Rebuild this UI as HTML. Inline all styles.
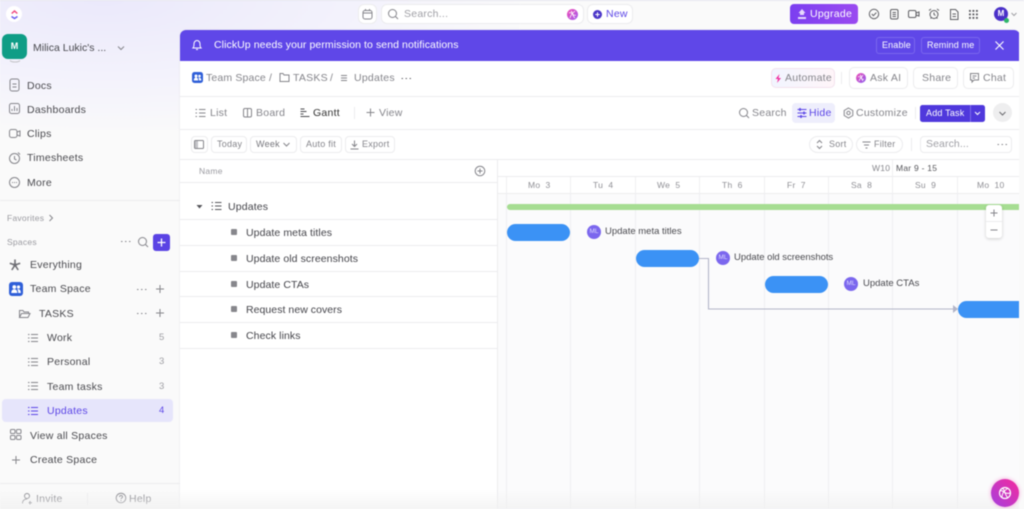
<!DOCTYPE html>
<html><head><meta charset="utf-8">
<style>
html,body{margin:0;padding:0}
body{width:1024px;height:509px;overflow:hidden;position:relative;background:#fafafa;font-family:"Liberation Sans",sans-serif;color:#4a4a4f}
#w{position:absolute;left:0;top:0;width:1024px;height:509px;overflow:hidden;filter:blur(.4px)}
.t{position:absolute;white-space:nowrap;font-size:10.5px;line-height:16px;letter-spacing:.25px}
.a{position:absolute}
.g{color:#85858b}
.btn{position:absolute;box-sizing:border-box;border:1px solid #ececee;border-radius:4px;background:#fff}
.l{position:absolute;background:#ececee}
.v{position:absolute;background:#efeff1;width:1px}
svg{position:absolute;overflow:visible}
.s{fill:none;stroke:#85858b;stroke-width:1}
.d{stroke:#5f5f64}
</style></head><body><div id="w">

<div class="a" style="left:0;top:0;width:520px;height:130px;background:radial-gradient(ellipse at 20% 0%,#ebe9fb 0%,#f4f3fc 45%,#fafafa 75%)"></div>
<div class="l" style="left:0;top:0;width:1024px;height:1px;background:#e6e6f0"></div>

<!-- logo -->
<div class="a" style="left:6px;top:6px;width:16px;height:16px;border-radius:50%;background:#fff"></div>
<svg style="left:6.500px;top:6.500px" width="15" height="15" viewBox="0 0 15 15"><path d="M4.500 9.500L7.500 11.500L10.500 9.500" fill="none" stroke="#6a5cf0" stroke-width="1.500"/><path d="M4.700 6.500L7.500 4L10.300 6.500" fill="none" stroke="#f0477e" stroke-width="1.500"/></svg>

<!-- workspace -->
<div class="a" style="left:2px;top:34px;width:25px;height:25px;border-radius:6px;background:#0f9d86;color:#fff;font-size:9px;font-weight:bold;text-align:center;line-height:25px">M</div>
<div class="t" style="left:33px;top:40px;letter-spacing:0">Milica Lukic's ...</div>
<svg style="left:117px;top:45px" width="8" height="6"><path class="s" d="M1 1.500L4 4.500L7 1.500"/></svg>
<svg style="left:8px;top:60px" width="14" height="4"><path d="M2 .5c1 1.200 2 1.500 5 1.500s4-.3 5-1.500" fill="none" stroke="#c4c4c8"/></svg>

<!-- sidebar nav -->
<svg style="left:8px;top:78px" width="14" height="14"><rect class="s" x="2" y="1" width="9" height="12" rx="2"/><path class="s" d="M4.500 6h4M4.500 9h4"/></svg>
<div class="t" style="left:27px;top:78px">Docs</div>
<svg style="left:8px;top:102px" width="14" height="14"><rect class="s" x="1.500" y="1.500" width="10" height="10" rx="2"/><path class="s" d="M4 9V7M6.500 9V4M9 9V6"/></svg>
<div class="t" style="left:27px;top:102px">Dashboards</div>
<svg style="left:8px;top:127px" width="14" height="14"><rect class="s" x="1.500" y="2.500" width="7.500" height="8" rx="2"/><path class="s" d="M9 5l3-1v5l-3-1"/></svg>
<div class="t" style="left:27px;top:126px">Clips</div>
<svg style="left:8px;top:151px" width="14" height="14"><circle class="s" cx="6.500" cy="7.500" r="5"/><path class="s" d="M6.500 5v3l2 1M10 1.500l2 2"/></svg>
<div class="t" style="left:27px;top:150px">Timesheets</div>
<svg style="left:8px;top:176px" width="14" height="14"><circle class="s" cx="6.500" cy="6.500" r="5"/><path d="M4 6.500h1M6 6.500h1M8 6.500h1" stroke="#85858b" fill="none"/></svg>
<div class="t" style="left:27px;top:175px">More</div>
<div class="l" style="left:0;top:200px;width:180px;height:1px"></div>

<div class="t" style="left:7px;top:210px;font-size:8.500px;color:#9a9aa0">Favorites</div>
<svg style="left:48px;top:214px" width="6" height="8"><path class="s" d="M1.500 1L4.500 4L1.500 7"/></svg>
<div class="t" style="left:7px;top:234px;font-size:8.500px;color:#9a9aa0">Spaces</div>
<svg style="left:120px;top:240px" width="14" height="3"><path d="M1 1.500h1.500M5 1.500h1.500M9 1.500h1.500" stroke="#85858b"/></svg>
<svg style="left:137px;top:236px" width="12" height="12"><circle class="s" cx="5.500" cy="5.500" r="4"/><path class="s" d="M8.500 8.500L11 11"/></svg>
<div class="a" style="left:153px;top:234px;width:17px;height:17px;border-radius:3px;background:#5a43e4"></div>
<svg style="left:153px;top:234px" width="17" height="17"><path d="M8.500 4.500v8M4.500 8.500h8" stroke="#fff" stroke-width="1.300"/></svg>

<svg style="left:8px;top:258px" width="14" height="14"><g stroke="#6f6f75" stroke-width="1.600"><path d="M7 7V1.500M7 7L1.800 5.300M7 7L12.200 5.300M7 7L3.800 12M7 7L10.200 12"/></g><circle cx="7" cy="7" r="1.800" fill="#6f6f75"/></svg>
<div class="t" style="left:30px;top:257px">Everything</div>
<div class="a" style="left:9px;top:282px;width:14px;height:14px;border-radius:3px;background:#2f5fd8"></div>
<svg style="left:9px;top:282px" width="14" height="14"><circle cx="5.300" cy="5" r="1.900" fill="#fff"/><circle cx="9.500" cy="5" r="1.600" fill="#fff"/><path d="M2.300 11c0-2.800 1.300-3.800 3-3.800s3 1 3 3.800zM9.200 11c0-2-.3-3-1-3.700 2-.5 3.600.6 3.600 3.700z" fill="#fff"/></svg>
<div class="t" style="left:30px;top:281px">Team Space</div>
<svg style="left:136px;top:288px" width="14" height="3"><path d="M1 1.500h1.500M5 1.500h1.500M9 1.500h1.500" stroke="#85858b"/></svg>
<svg style="left:155px;top:284px" width="10" height="10"><path class="s" d="M5 1v8M1 5h8"/></svg>
<svg style="left:18px;top:307px" width="14" height="14"><path class="s" d="M1.500 10.500V3.500h3.500l1 1.500h4.500v1.500M1.500 10.500l2-4h8.500l-2 4z"/></svg>
<div class="t" style="left:39px;top:306px">TASKS</div>
<svg style="left:136px;top:312px" width="14" height="3"><path d="M1 1.500h1.500M5 1.500h1.500M9 1.500h1.500" stroke="#85858b"/></svg>
<svg style="left:155px;top:308px" width="10" height="10"><path class="s" d="M5 1v8M1 5h8"/></svg>

<svg style="left:27px;top:332px" width="12" height="12"><path class="s" d="M4 2.500h7M4 6h7M4 9.500h7M1 2.500h1.500M1 6h1.500M1 9.500h1.500"/></svg>
<div class="t" style="left:47px;top:330px">Work</div><div class="t" style="left:159px;top:330px;font-size:9.500px;color:#a0a0a5">5</div>
<svg style="left:27px;top:356px" width="12" height="12"><path class="s" d="M4 2.500h7M4 6h7M4 9.500h7M1 2.500h1.500M1 6h1.500M1 9.500h1.500"/></svg>
<div class="t" style="left:47px;top:354px">Personal</div><div class="t" style="left:159px;top:354px;font-size:9.500px;color:#a0a0a5">3</div>
<svg style="left:27px;top:380px" width="12" height="12"><path class="s" d="M4 2.500h7M4 6h7M4 9.500h7M1 2.500h1.500M1 6h1.500M1 9.500h1.500"/></svg>
<div class="t" style="left:47px;top:379px">Team tasks</div><div class="t" style="left:159px;top:379px;font-size:9.500px;color:#a0a0a5">3</div>
<div class="a" style="left:2px;top:399px;width:171px;height:23px;border-radius:4px;background:#e6e5fb"></div>
<svg style="left:27px;top:405px" width="12" height="12"><path fill="none" stroke="#5b45e6" d="M4 2.500h7M4 6h7M4 9.500h7M1 2.500h1.500M1 6h1.500M1 9.500h1.500"/></svg>
<div class="t" style="left:47px;top:403px;color:#5b45e6">Updates</div><div class="t" style="left:159px;top:403px;font-size:9.500px;color:#5b45e6">4</div>
<svg style="left:10px;top:429px" width="12" height="12"><rect class="s" x=".5" y=".5" width="4.500" height="4" rx="1"/><rect class="s" x="6.500" y=".5" width="4.500" height="4" rx="1"/><rect class="s" x=".5" y="6.500" width="4.500" height="4" rx="1"/><rect class="s" x="6.500" y="6.500" width="4.500" height="4" rx="1"/></svg>
<div class="t" style="left:30px;top:428px">View all Spaces</div>
<svg style="left:11px;top:455px" width="10" height="10"><path class="s" d="M5 1v8M1 5h8"/></svg>
<div class="t" style="left:30px;top:452px">Create Space</div>
<div class="l" style="left:0;top:483px;width:180px;height:1px"></div>
<div class="l" style="left:87px;top:493px;width:1px;height:12px"></div>
<svg style="left:21px;top:492px" width="13" height="13"><circle class="s" cx="6" cy="4" r="2.500"/><path class="s" d="M1.500 11.500c0-3 2-4.500 4.500-4.500M9 9v3.500M7.500 10.800h3.500"/></svg>
<div class="t g" style="left:36px;top:491px">Invite</div>
<svg style="left:115px;top:492px" width="12" height="12"><circle class="s" cx="6" cy="6" r="4.800"/><path class="s" d="M4.500 5c0-2 3-2 3 0 0 1-1.500 1-1.500 2M6 8v1"/></svg>
<div class="t g" style="left:129px;top:491px">Help</div>

<!-- top bar -->
<div class="btn" style="left:358px;top:4px;width:19px;height:20px;border-radius:6px"></div>
<svg style="left:362px;top:9px" width="11" height="11"><rect class="s" x="1" y="1.500" width="9" height="8.500" rx="2"/><path class="s" d="M1 4h9M3.500 0v2M7.500 0v2"/></svg>
<div class="btn" style="left:381px;top:4px;width:203px;height:20px;border-radius:6px"></div>
<svg style="left:387px;top:8px" width="12" height="12"><circle class="s" cx="5.500" cy="5.500" r="4"/><path class="s" d="M8.500 8.500L11 11"/></svg>
<div class="t" style="left:404px;top:6px;color:#a0a0a6">Search...</div>
<div class="a" style="left:567px;top:9px;width:11px;height:11px;border-radius:50%;background:linear-gradient(135deg,#f04bb5,#a35cf0)"></div>
<svg style="left:567px;top:9px" width="11" height="11"><path d="M2 4c3-2 4 4 7 2M4 2c2 1 1 5 4 7M8 2C6 4 4 5 3 9" fill="none" stroke="#fff" stroke-width=".7"/></svg>
<div class="btn" style="left:587px;top:4px;width:46px;height:20px;border-radius:6px"></div>
<div class="a" style="left:593px;top:9.500px;width:9px;height:9px;border-radius:50%;background:#4a35c8"></div>
<svg style="left:593px;top:9.500px" width="9" height="9"><path d="M4.500 2.300v4.400M2.300 4.500h4.400" stroke="#fff"/></svg>
<div class="t" style="left:606px;top:6px;color:#5b45e6">New</div>

<div class="a" style="left:790px;top:4px;width:68px;height:20px;border-radius:4px;background:linear-gradient(90deg,#7b3ff0,#9a4af0)"></div>
<svg style="left:796px;top:8px" width="12" height="12"><path d="M6 1l3.500 4H8v2H4V5H2.500zM2 9h8v2H2z" fill="#fff" opacity=".8"/></svg>
<div class="t" style="left:810px;top:6px;color:#fff">Upgrade</div>
<svg style="left:868px;top:8px" width="12" height="12"><circle class="s d" cx="6" cy="6" r="4.700"/><path class="s d" d="M3.800 6l1.600 1.700L8.300 4.600"/></svg>
<svg style="left:888px;top:8px" width="12" height="12"><rect class="s d" x="2.500" y="1.500" width="7.500" height="9.500" rx="1.500"/><path class="s d" d="M4.500 4.500h3.500M4.500 6.500h3.500M4.500 8.500h3.500"/></svg>
<svg style="left:908px;top:8px" width="12" height="12"><rect class="s d" x=".5" y="2.500" width="7.500" height="7" rx="1.500"/><path class="s d" d="M8 5l3-1v4l-3-1"/></svg>
<svg style="left:928px;top:8px" width="12" height="12"><circle class="s d" cx="6" cy="6.500" r="4"/><path class="s d" d="M6 4.500v2l1.500 1M1 2.500l2-1.500M11 2.500L9 1M2.500 10.500L3.500 9.500M9.500 10.500L8.500 9.500"/></svg>
<svg style="left:948px;top:8px" width="12" height="12"><path class="s d" d="M2.500 1.500h5l2.500 2.500v7.500h-7.500z"/><path class="s d" d="M4.500 6h3.500M4.500 8.500h3.500"/></svg>
<svg style="left:968px;top:9px" width="11" height="11"><g fill="#55555a"><rect x="1" y="1" width="1.800" height="1.800"/><rect x="4.500" y="1" width="1.800" height="1.800"/><rect x="8" y="1" width="1.800" height="1.800"/><rect x="1" y="4.500" width="1.800" height="1.800"/><rect x="4.500" y="4.500" width="1.800" height="1.800"/><rect x="8" y="4.500" width="1.800" height="1.800"/><rect x="1" y="8" width="1.800" height="1.800"/><rect x="4.500" y="8" width="1.800" height="1.800"/><rect x="8" y="8" width="1.800" height="1.800"/></g></svg>
<div class="a" style="left:994px;top:7px;width:14px;height:14px;border-radius:50%;background:#4a30c8;color:#fff;font-size:8px;font-weight:bold;text-align:center;line-height:14px">M</div>
<div class="a" style="left:1004px;top:18px;width:5px;height:5px;border-radius:50%;background:#2fb56a"></div>
<svg style="left:1011px;top:12px" width="6" height="5"><path class="s" d="M.5 1L3 3.500L5.500 1" style="stroke:#a0a0a5"/></svg>

<!-- main card -->
<div class="a" style="left:180px;top:30px;width:839px;height:479px;background:#fff;border-radius:6px 6px 0 0;box-shadow:0 0 2px #e2e2e6"></div>
<div class="a" style="left:180px;top:30px;width:840px;height:31px;background:#5f47e8;border-radius:6px 6px 0 0"></div>
<svg style="left:191px;top:39px" width="12" height="12"><path fill="none" stroke="#fff" d="M2 9c1-1 1-2 1-4s1.300-3.500 3-3.500S9 3 9 5s0 3 1 4zM5 10.500h2"/></svg>
<div class="t" style="left:214px;top:37px;color:#fff;letter-spacing:.08px">ClickUp needs your permission to send notifications</div>
<div class="a" style="left:876px;top:36.500px;width:39px;height:17px;border:1px solid #7a66ee;border-radius:3px;box-sizing:border-box"></div>
<div class="t" style="left:882px;top:37px;color:#fff;font-size:9px;letter-spacing:.15px">Enable</div>
<div class="a" style="left:921px;top:36.500px;width:59px;height:17px;border:1px solid #7a66ee;border-radius:3px;box-sizing:border-box"></div>
<div class="t" style="left:927px;top:37px;color:#fff;font-size:9px;letter-spacing:.15px">Remind me</div>
<svg style="left:995px;top:41px" width="9" height="9"><path d="M.5.500l8 8M8.500.500l-8 8" stroke="#fff" stroke-width="1.100"/></svg>

<!-- breadcrumb -->
<div class="a" style="left:192px;top:72px;width:11px;height:11px;border-radius:2.500px;background:#2f5fd8"></div>
<svg style="left:192px;top:72px" width="11" height="11"><circle cx="4" cy="4" r="1.500" fill="#fff"/><circle cx="7.500" cy="4" r="1.300" fill="#fff"/><path d="M1.800 8.500c0-2 1-3 2.200-3s2.200 1 2.200 3zM7 8.500c0-1.200-.1-2-.6-2.800 1.800-.5 2.900.6 2.900 2.800z" fill="#fff"/></svg>
<div class="t g" style="left:206px;top:70px;letter-spacing:.15px">Team Space</div>
<div class="t g" style="left:269px;top:70px">/</div>
<svg style="left:279px;top:72px" width="11" height="11"><path class="s" d="M1 9.500V1.500h3l1 1.500h5v6.500z"/></svg>
<div class="t g" style="left:293px;top:70px">TASKS</div>
<div class="t g" style="left:330px;top:70px">/</div>
<svg style="left:340px;top:74px" width="8" height="9"><path class="s" d="M1 1.500h6M1 4h6M1 6.500h6"/></svg>
<div class="t g" style="left:354px;top:70px;">Updates</div>
<svg style="left:401px;top:77px" width="12" height="3"><path d="M.5 1.500h1.500M4.500 1.500h1.500M8.500 1.500h1.500" stroke="#6a6a70"/></svg>

<div class="a" style="left:771px;top:68px;width:64px;height:20px;border-radius:5px;border:1px solid #f3e3ee;box-sizing:border-box;background:linear-gradient(90deg,#f2f5ff,#fff5f9)"></div>
<svg style="left:775px;top:74px" width="7" height="9"><path d="M4.500 0L.5 5h2.500L2 9l4-5H3.500z" fill="#f0309f"/></svg>
<div class="t g" style="left:785px;top:70px">Automate</div>
<div class="l" style="left:841px;top:72px;width:1px;height:12px"></div>
<div class="btn" style="left:849px;top:67px;width:59px;height:22px;border-radius:5px"></div>
<div class="a" style="left:856px;top:73px;width:10px;height:10px;border-radius:50%;background:linear-gradient(135deg,#f04bb5,#8a5cf0)"></div>
<svg style="left:856px;top:73px" width="10" height="10"><path d="M2 4c3-2 3 4 6 2M4 2c2 1 1 4 3 6M7 2C6 4 4 5 3 8" fill="none" stroke="#fff" stroke-width=".7"/></svg>
<div class="t g" style="left:870px;top:70px">Ask AI</div>
<div class="btn" style="left:913px;top:67px;width:45px;height:22px;border-radius:5px"></div>
<div class="t g" style="left:922px;top:70px">Share</div>
<div class="btn" style="left:963px;top:67px;width:51px;height:22px;border-radius:5px"></div>
<svg style="left:969px;top:72px" width="11" height="11"><path class="s" d="M1.500 1.500h8v6.500h-4.500l-2 2v-2h-1.500z"/><path class="s" d="M3.500 4h4M3.500 6h2.500"/></svg>
<div class="t g" style="left:983px;top:70px">Chat</div>
<div class="l" style="left:180px;top:95.500px;width:839px;height:1px"></div>

<!-- tabs -->
<svg style="left:195px;top:108px" width="11" height="11"><path class="s" d="M4 1.500h6.500M4 5h6.500M4 8.500h6.500M.5 1.500h1.500M.5 5h1.500M.5 8.500h1.500"/></svg>
<div class="t g" style="left:210px;top:105px">List</div>
<svg style="left:243px;top:108px" width="10" height="10"><rect class="s" x=".5" y=".5" width="8" height="8.500" rx="1.500"/><path class="s" d="M4.500.5v8.500"/></svg>
<div class="t g" style="left:256px;top:105px">Board</div>
<svg style="left:300px;top:108px" width="10" height="10"><path d="M.5 1h4M.5 3.500h6M.5 6h3M.5 8.500h9" stroke="#4a4a4f" fill="none"/></svg>
<div class="t" style="left:313px;top:105px;color:#333">Gantt</div>
<div class="a" style="left:295px;top:128.500px;width:49px;height:1.500px;background:#6a6a6f"></div>
<div class="l" style="left:354px;top:107px;width:1px;height:12px"></div>
<svg style="left:366px;top:108px" width="9" height="9"><path class="s" d="M4.500.5v8M.5 4.500h8"/></svg>
<div class="t g" style="left:379px;top:105px">View</div>

<svg style="left:738px;top:107px" width="12" height="12"><circle class="s" cx="5.500" cy="5.500" r="4"/><path class="s" d="M8.500 8.500L11 11"/></svg>
<div class="t g" style="left:752px;top:105px">Search</div>
<div class="a" style="left:792px;top:103px;width:43px;height:20px;border-radius:4px;background:#eeeefc"></div>
<svg style="left:797px;top:108px" width="11" height="10"><path fill="none" stroke="#5b45e6" d="M.5 1.500h9M.5 5h9M.5 8.500h9"/><path stroke="#5b45e6" stroke-width="1.500" d="M3 0v3M7 3.500v3M4 7v3"/></svg>
<div class="t" style="left:809px;top:105px;color:#5b45e6">Hide</div>
<svg style="left:843px;top:107px" width="11" height="12"><path class="s" d="M5.500 1l4.300 2.500v5L5.500 11 1.200 8.500v-5z"/><circle class="s" cx="5.500" cy="6" r="1.700"/></svg>
<div class="t g" style="left:856px;top:105px">Customize</div>
<div class="l" style="left:915px;top:107px;width:1px;height:12px"></div>
<div class="a" style="left:920px;top:104.500px;width:65px;height:17px;border-radius:2.500px;background:#4f38dc"></div>
<div class="t" style="left:926px;top:105px;color:#fff;font-size:9px;letter-spacing:.2px">Add Task</div>
<div class="a" style="left:970px;top:104.500px;width:1px;height:17px;background:#7c69ea"></div>
<svg style="left:974px;top:111px" width="7" height="5"><path fill="none" stroke="#fff" d="M1 1l2.500 2.500L6 1"/></svg>
<div class="a" style="left:993px;top:103px;width:19px;height:19px;border-radius:50%;background:#eeeeef"></div>
<svg style="left:999px;top:111px" width="7" height="5"><path class="s" d="M.5 1l3 3 3-3" style="stroke:#6a6a6f"/></svg>
<div class="l" style="left:180px;top:129px;width:839px;height:1px"></div>

<!-- toolbar -->
<div class="btn" style="left:191px;top:136px;width:17px;height:17px"></div>
<svg style="left:194px;top:140px" width="10" height="9"><rect class="s" x=".5" y=".5" width="9" height="8" rx="1"/><rect x="1" y="1" width="3" height="7" fill="#c4c4c8"/></svg>
<div class="btn" style="left:211px;top:136px;width:36px;height:17px"></div>
<div class="t g" style="left:217px;top:136px;font-size:9px">Today</div>
<div class="btn" style="left:250px;top:136px;width:47px;height:17px"></div>
<div class="t" style="left:256px;top:136px;font-size:9px;color:#77777d">Week</div>
<svg style="left:283px;top:142px" width="7" height="5"><path class="s" d="M.5 1l3 3 3-3"/></svg>
<div class="btn" style="left:300px;top:136px;width:42px;height:17px"></div>
<div class="t g" style="left:306px;top:136px;font-size:9px">Auto fit</div>
<div class="btn" style="left:345px;top:136px;width:50px;height:17px"></div>
<svg style="left:350px;top:140px" width="9" height="10"><path class="s" d="M4.500.5V6M2 4l2.500 2.500L7 4M.5 9h8"/></svg>
<div class="t g" style="left:362px;top:136px;font-size:9px">Export</div>

<div class="btn" style="left:809px;top:136px;width:44px;height:17px;border-radius:9px"></div>
<svg style="left:816px;top:140px" width="7" height="9"><path class="s" d="M1 3l2.500-2.500L6 3M1 6l2.500 2.500L6 6"/></svg>
<div class="t g" style="left:829px;top:136px;font-size:9px">Sort</div>
<div class="btn" style="left:856px;top:136px;width:47px;height:17px;border-radius:9px"></div>
<svg style="left:862px;top:141px" width="9" height="8"><path class="s" d="M.5 1h8M2 4h5M3.500 7h2"/></svg>
<div class="t g" style="left:874px;top:136px;font-size:9px">Filter</div>
<div class="l" style="left:911px;top:138px;width:1px;height:13px"></div>
<div class="btn" style="left:920px;top:136px;width:92px;height:17px"></div>
<div class="t" style="left:926px;top:136px;color:#a0a0a6;font-size:10.500px;letter-spacing:.1px">Search...</div>
<svg style="left:997px;top:143px" width="12" height="3"><path d="M.5 1.500h1.500M4.500 1.500h1.500M8.500 1.500h1.500" stroke="#85858b"/></svg>
<div class="l" style="left:180px;top:159px;width:839px;height:1px"></div>

<!-- left pane -->
<div class="t" style="left:199px;top:163px;font-size:8.500px;color:#9a9aa0">Name</div>
<svg style="left:474px;top:165px" width="12" height="12"><circle class="s" cx="6" cy="6" r="4.800"/><path class="s" d="M6 3.500v5M3.500 6h5"/></svg>
<div class="l" style="left:180px;top:182px;width:317px;height:1px"></div>
<svg style="left:196px;top:205px" width="7" height="4"><path d="M.5 0h6L3.500 3.500z" fill="#55555a"/></svg>
<svg style="left:211px;top:201px" width="11" height="11"><path d="M4 1.500h6.500M4 5h6.500M4 8.500h6.500M.5 1.500h1.500M.5 5h1.500M.5 8.500h1.500" stroke="#55555a" fill="none"/></svg>
<div class="t" style="left:228px;top:199px;color:#44444a;letter-spacing:.15px">Updates</div>
<div class="l" style="left:180px;top:219px;width:317px;height:1px"></div>
<div class="l" style="left:180px;top:245px;width:317px;height:1px"></div>
<div class="l" style="left:180px;top:271px;width:317px;height:1px"></div>
<div class="l" style="left:180px;top:296px;width:317px;height:1px"></div>
<div class="l" style="left:180px;top:322px;width:317px;height:1px"></div>
<div class="l" style="left:180px;top:348px;width:317px;height:1px"></div>
<div class="a" style="left:231px;top:229px;width:6px;height:6px;border-radius:1px;background:#87878c"></div>
<div class="t" style="left:246px;top:225px;color:#44444a;letter-spacing:.08px">Update meta titles</div>
<div class="a" style="left:231px;top:255px;width:6px;height:6px;border-radius:1px;background:#87878c"></div>
<div class="t" style="left:246px;top:251px;color:#44444a;letter-spacing:.08px">Update old screenshots</div>
<div class="a" style="left:231px;top:281px;width:6px;height:6px;border-radius:1px;background:#87878c"></div>
<div class="t" style="left:246px;top:277px;color:#44444a;letter-spacing:.08px">Update CTAs</div>
<div class="a" style="left:231px;top:306px;width:6px;height:6px;border-radius:1px;background:#87878c"></div>
<div class="t" style="left:246px;top:302px;color:#44444a;letter-spacing:.05px">Request new covers</div>
<div class="a" style="left:231px;top:332px;width:6px;height:6px;border-radius:1px;background:#87878c"></div>
<div class="t" style="left:246px;top:328px;color:#44444a;letter-spacing:.08px">Check links</div>

<!-- gantt -->
<div class="a" style="left:498px;top:193px;width:521px;height:316px;background:#fbfbfc"></div>
<div class="l" style="left:497px;top:160px;width:1px;height:349px"></div>
<div class="l" style="left:498px;top:176px;width:521px;height:1px"></div>
<div class="l" style="left:498px;top:193px;width:521px;height:1px"></div>
<div class="v" style="left:506px;top:177px;height:332px"></div>
<div class="v" style="left:570px;top:177px;height:332px"></div>
<div class="v" style="left:635px;top:177px;height:332px"></div>
<div class="v" style="left:699px;top:177px;height:332px"></div>
<div class="v" style="left:764px;top:177px;height:332px"></div>
<div class="v" style="left:828px;top:177px;height:332px"></div>
<div class="v" style="left:892px;top:160px;height:349px"></div>
<div class="v" style="left:957px;top:177px;height:332px"></div>
<div class="t g" style="left:872px;top:160px;font-size:8.500px">W10</div>
<div class="t" style="left:896px;top:160px;font-size:8.500px;color:#55555a">Mar 9 - 15</div>
<div class="t" style="left:528px;top:177px;font-size:8.500px;color:#8f8f95">Mo&nbsp; 3</div>
<div class="t" style="left:593px;top:177px;font-size:8.500px;color:#8f8f95">Tu&nbsp; 4</div>
<div class="t" style="left:657px;top:177px;font-size:8.500px;color:#8f8f95">We&nbsp; 5</div>
<div class="t" style="left:722px;top:177px;font-size:8.500px;color:#8f8f95">Th&nbsp; 6</div>
<div class="t" style="left:787px;top:177px;font-size:8.500px;color:#8f8f95">Fr&nbsp; 7</div>
<div class="t" style="left:851px;top:177px;font-size:8.500px;color:#8f8f95">Sa&nbsp; 8</div>
<div class="t" style="left:915px;top:177px;font-size:8.500px;color:#8f8f95">Su&nbsp; 9</div>
<div class="t" style="left:977px;top:177px;font-size:8.500px;color:#8f8f95">Mo&nbsp; 10</div>

<div class="a" style="left:507px;top:204px;width:512px;height:6px;background:#a6dd92;border-radius:3px 0 0 3px"></div>
<div class="a" style="left:507px;top:224px;width:63px;height:17px;border-radius:8.500px;background:#3b92f5"></div>
<div class="a" style="left:636px;top:250px;width:63px;height:17px;border-radius:8.500px;background:#3b92f5"></div>
<div class="a" style="left:765px;top:275.500px;width:63px;height:17px;border-radius:8.500px;background:#3b92f5"></div>
<div class="a" style="left:958px;top:301px;width:61px;height:17px;border-radius:8.500px 0 0 8.500px;background:#3b92f5"></div>
<svg style="left:699px;top:257.500px" width="262" height="56"><path d="M0 .5h9.500V51H255" fill="none" stroke="#b3b5c8" stroke-width="1.100"/><path d="M254 47l5 4-5 4z" fill="#b3b5c8"/></svg>
<div class="a" style="left:587px;top:225px;width:14px;height:14px;border-radius:50%;background:#7b67ee;color:#dcd8ff;font-size:6.500px;text-align:center;line-height:14px">ML</div>
<div class="t" style="left:605px;top:224px;font-size:9.500px;color:#4a4a4f;letter-spacing:0">Update meta titles</div>
<div class="a" style="left:716px;top:251px;width:14px;height:14px;border-radius:50%;background:#7b67ee;color:#dcd8ff;font-size:6.500px;text-align:center;line-height:14px">ML</div>
<div class="t" style="left:734px;top:250px;font-size:9.500px;color:#4a4a4f;letter-spacing:-.03px">Update old screenshots</div>
<div class="a" style="left:844px;top:277px;width:14px;height:14px;border-radius:50%;background:#7b67ee;color:#dcd8ff;font-size:6.500px;text-align:center;line-height:14px">ML</div>
<div class="t" style="left:863px;top:276px;font-size:9.500px;color:#4a4a4f;letter-spacing:0">Update CTAs</div>

<div class="a" style="left:986px;top:205px;width:16px;height:33px;background:#fff;border-radius:3px;box-shadow:0 1px 3px rgba(0,0,0,.18)"></div>
<div class="l" style="left:986px;top:221px;width:16px;height:1px"></div>
<svg style="left:990px;top:209px" width="8" height="8"><path class="s" d="M4 .5v7M.5 4h7"/></svg>
<svg style="left:990px;top:226px" width="8" height="8"><path class="s" d="M.5 4h7"/></svg>

<div class="a" style="left:0;top:490px;width:1024px;height:19px;background:linear-gradient(180deg,rgba(245,245,245,0),rgba(240,240,240,.7))"></div>
<div class="a" style="left:1019px;top:30px;width:5px;height:479px;background:#fafafa"></div>

<!-- fab -->
<div class="a" style="left:991px;top:479px;width:28px;height:28px;border-radius:50%;background:linear-gradient(45deg,#a43fe0,#f52a9c);box-shadow:0 0 4px #f4a0d8"></div>
<svg style="left:997px;top:485px" width="16" height="16" viewBox="0 0 16 16"><circle cx="8" cy="8" r="5.500" fill="none" stroke="#fff" stroke-width="1.200"/><path d="M3 6c3-2 4 4 10 2M5 3c3 1 2 6 6 10M11 3c-2 2-6 3-6 10" fill="none" stroke="#fff" stroke-width="1"/></svg>

</div></body></html>
